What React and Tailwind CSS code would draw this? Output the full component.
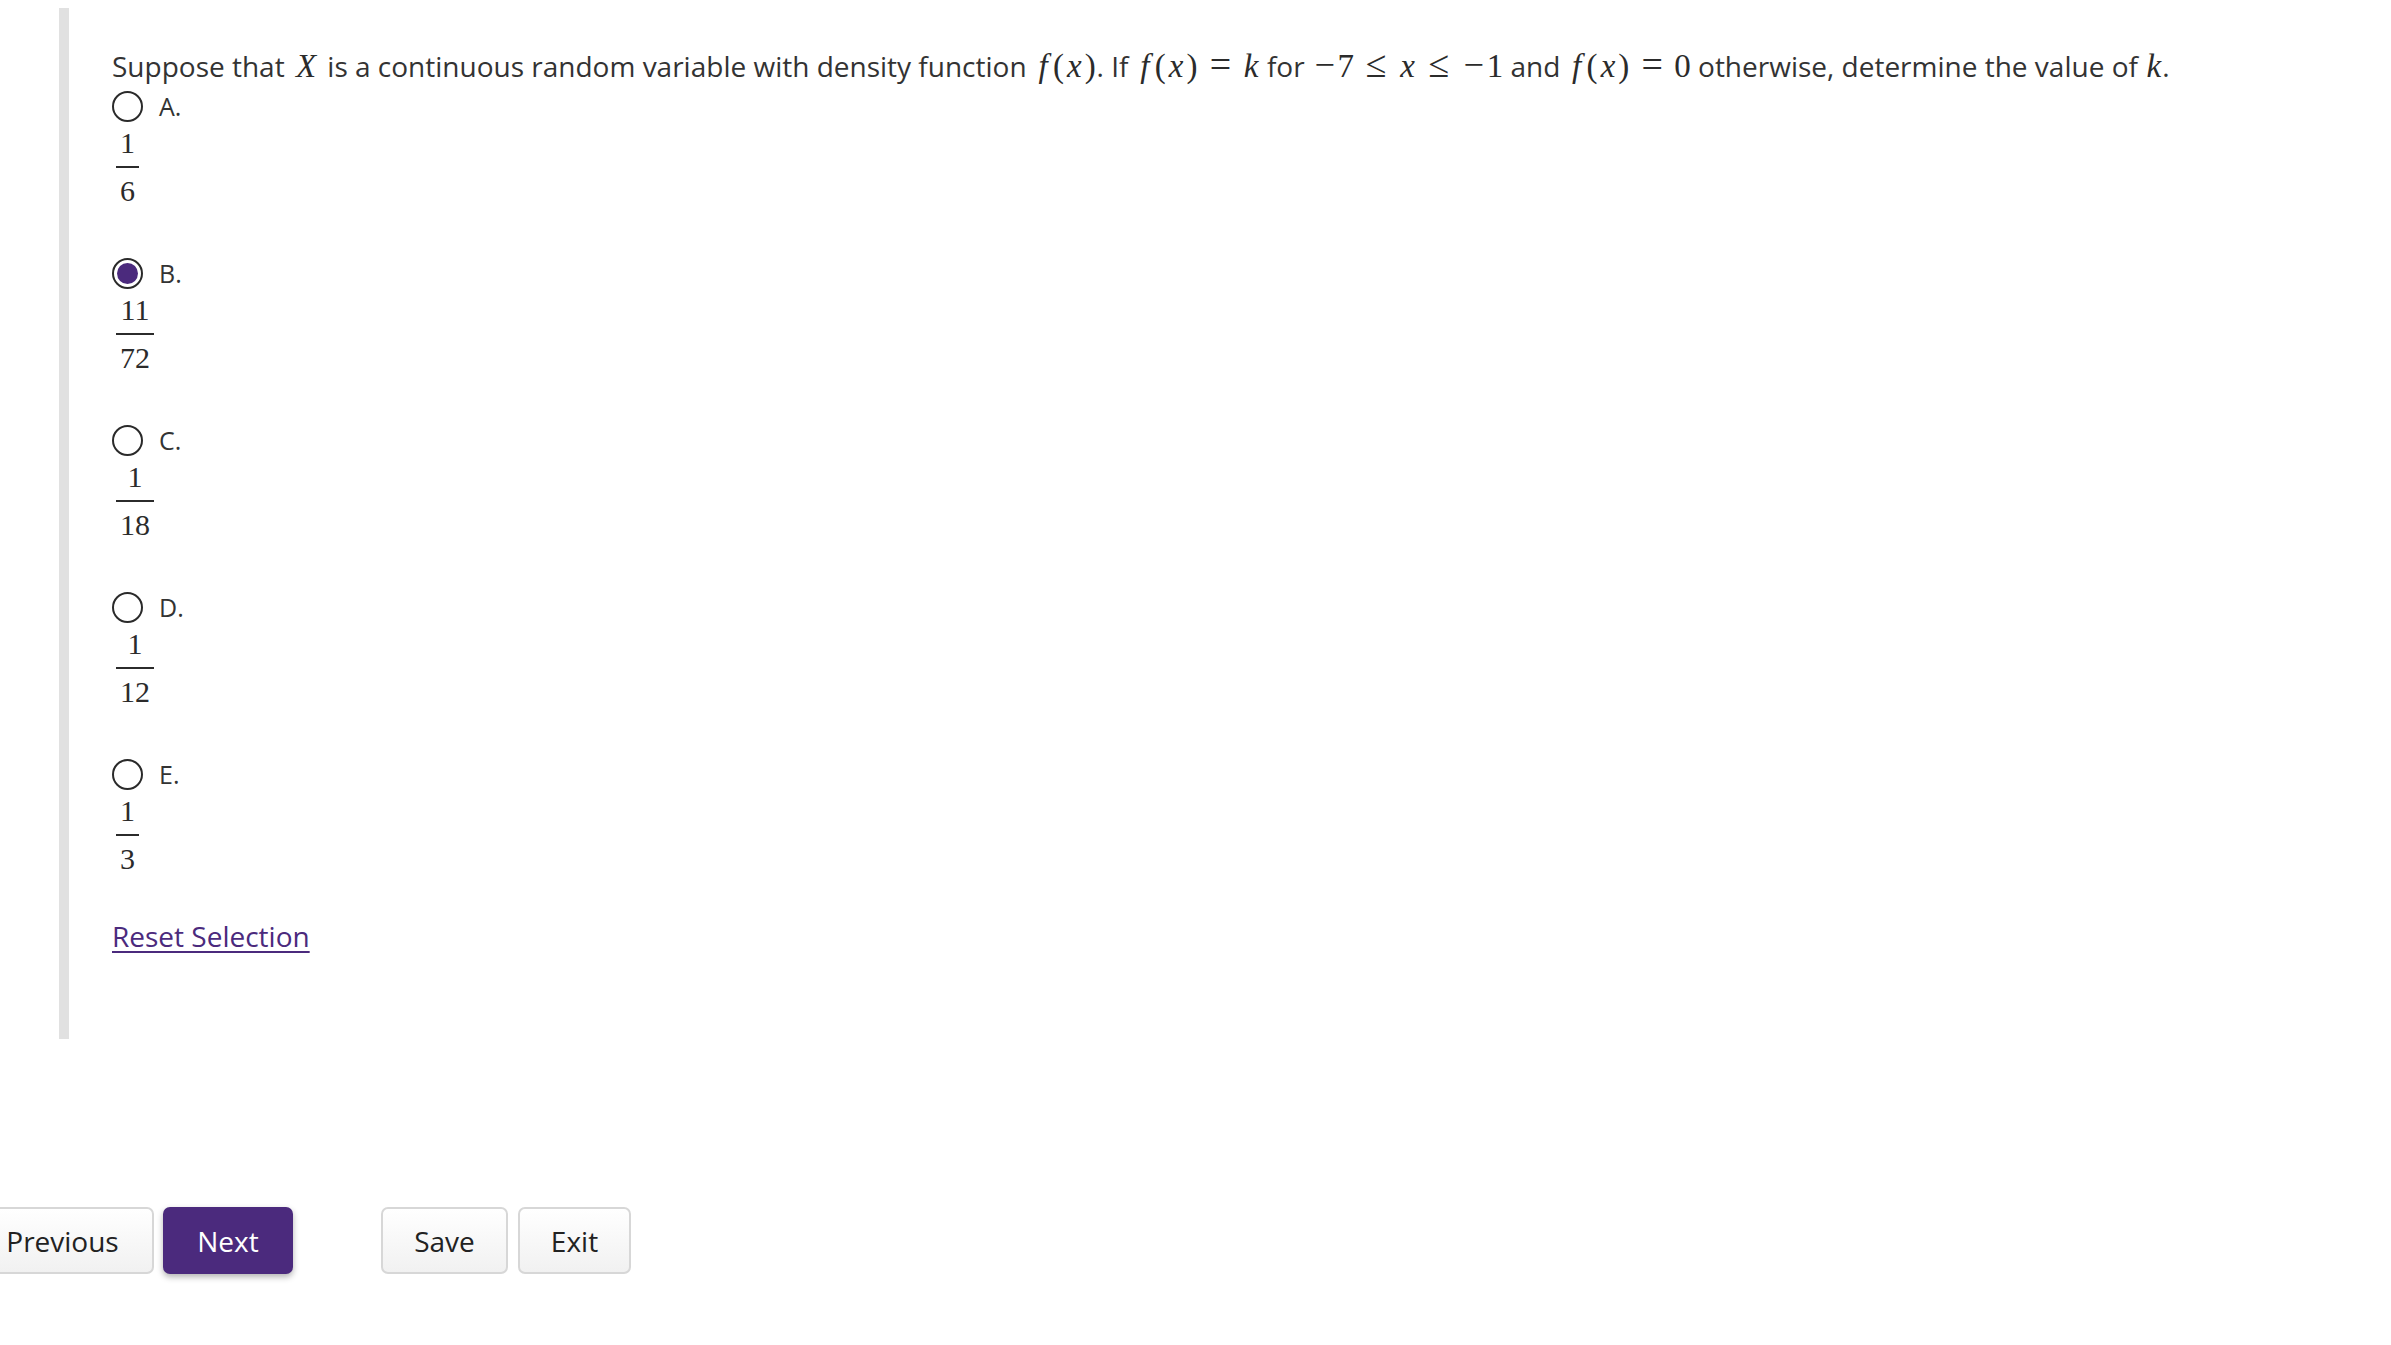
import React from 'react';

const serif = "font-['Liberation_Serif','Times_New_Roman',serif]";

// math run, sized so its x-height matches the surrounding text
function M({ children }) {
  return <span className={`${serif} text-[33px] leading-none text-[#2b2b2b]`}>{children}</span>;
}

// TeX-like glyph boxes (widths in em, as the TeX fonts set them)
const Op = ({ c }) => (
  <span className="mx-[0.278em] inline-block w-[0.778em] text-center">
    <span className="text-[1.15em] leading-none">{c}</span>
  </span>
);
const Minus = () => (
  <span className="inline-block w-[0.778em] text-center">
    <span className="text-[1.1em] leading-none">−</span>
  </span>
);
const Par = ({ c }) => <span className="inline-block w-[0.389em] text-center">{c}</span>;
const V = ({ c, w }) => <i className={`inline-block text-center ${w}`}>{c}</i>;

function Fx() {
  return (
    <>
      <V c="f" w="w-[0.55em]" />
      <Par c="(" />
      <V c="x" w="w-[0.572em]" />
      <Par c=")" />
    </>
  );
}

function Radio({ checked }) {
  return (
    <span className="flex h-[31px] w-[31px] items-center justify-center rounded-full border-[2.5px] border-[#2a2a2a] bg-white">
      {checked && <span className="h-[21px] w-[21px] rounded-full bg-[#4b2a7d]" />}
    </span>
  );
}

function Frac({ n, d }) {
  return (
    <div className={`ml-[4px] inline-flex w-fit flex-col items-stretch text-center ${serif} text-[30px] text-[#2b2b2b]`}>
      <span className="mt-[6px] px-[4px] leading-[29px]">{n}</span>
      <div className="mt-[9px] h-[2px] bg-[#2b2b2b]" />
      <span className="mt-[8px] px-[4px] leading-[29px]">{d}</span>
    </div>
  );
}

const options = [
  { label: 'A.', n: '1', d: '6' },
  { label: 'B.', n: '11', d: '72', checked: true },
  { label: 'C.', n: '1', d: '18' },
  { label: 'D.', n: '1', d: '12' },
  { label: 'E.', n: '1', d: '3' },
];

function Btn({ children, className = '', primary }) {
  return (
    <button
      className={
        primary
          ? `h-[67px] rounded-[7px] bg-[#4b2a7d] text-[28px] text-white shadow-[0_3px_6px_rgba(0,0,0,0.3)] ${className}`
          : `h-[67px] rounded-[7px] border-2 border-[#d7d7d7] bg-gradient-to-b from-white to-[#f1f1f1] text-[28px] text-[#222] ${className}`
      }
    >
      {children}
    </button>
  );
}

export default function App() {
  return (
    <div className="min-h-screen bg-white pt-[8px] font-['Open_Sans',sans-serif] text-[#333]">
      <div className="ml-[59px] h-[1031px] border-l-[10px] border-[#e1e1e1] pl-[43px] pt-[37px]">
        <p className="text-[28px] leading-[42px] whitespace-nowrap">
          Suppose that <M><V c="X" w="w-[0.852em]" /></M> is a continuous random variable with density function{' '}
          <M><Fx /></M>. If{' '}
          <M>
            <Fx />
            <Op c="=" />
            <V c="k" w="w-[0.521em]" />
          </M>{' '}
          for{' '}
          <M>
            <Minus />7<Op c="≤" />
            <V c="x" w="w-[0.572em]" />
            <Op c="≤" />
            <Minus />1
          </M>{' '}
          and{' '}
          <M>
            <Fx />
            <Op c="=" />0
          </M>{' '}
          otherwise, determine the value of <M><V c="k" w="w-[0.521em]" /></M>.
        </p>

        <div className="mt-[4px] flex flex-col gap-[53px]">
          {options.map((o) => (
            <div key={o.label} className="flex flex-col">
              <div className="flex h-[31px] items-center">
                <Radio checked={o.checked} />
                <span className="ml-[16px] text-[25px] leading-[31px]">{o.label}</span>
              </div>
              <Frac n={o.n} d={o.d} />
            </div>
          ))}
        </div>

        <a
          href="#"
          className="mt-[42px] inline-block text-[28px] leading-[42px] text-[#4b2a7d] underline decoration-2 underline-offset-[4px]"
        >
          Reset Selection
        </a>
      </div>

      <div className="mt-[168px] flex items-center">
        <Btn className="-ml-[29px] w-[183px]">Previous</Btn>
        <Btn primary className="ml-[9px] w-[130px]">Next</Btn>
        <Btn className="ml-[88px] w-[127px]">Save</Btn>
        <Btn className="ml-[10px] w-[113px]">Exit</Btn>
      </div>
    </div>
  );
}
